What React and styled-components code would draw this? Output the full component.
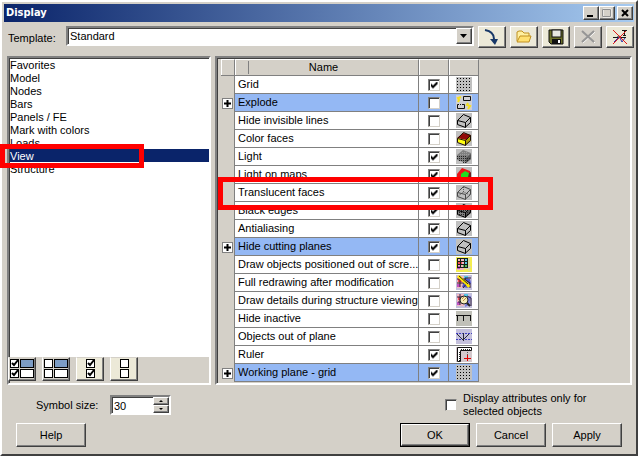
import React, { useState } from "react";
import styled, { createGlobalStyle, css } from "styled-components";

const face = "#d4d0c8";
const shade = "#808080";
const dark = "#404040";
const navy = "#0a246a";
const rowBlue = "#94b8f4";

const GlobalStyle = createGlobalStyle`
  * { box-sizing: border-box; }
  body { margin: 0; background: ${face}; }
  body, button, input, select {
    font-family: "Liberation Sans", Arial, sans-serif;
    font-size: 11px;
    line-height: 13px;
    color: #000;
  }
`;

const raised = css`
  border: 1px solid;
  border-color: #fff ${dark} ${dark} #fff;
  box-shadow: inset -1px -1px 0 ${shade};
`;

const sunken = css`
  border: 2px solid;
  border-color: ${shade} #fff #fff ${shade};
  box-shadow: inset 1px 1px 0 ${dark};
`;

const Window = styled.main`
  display: flex;
  flex-direction: column;
  min-height: 100vh;
  padding: 2px;
  background: ${face};
  border: 2px solid;
  border-color: #fff ${dark} ${dark} #fff;
`;

const TitleBar = styled.header`
  display: flex;
  align-items: center;
  gap: 2px;
  height: 18px;
  padding: 0 1px 0 2px;
  color: #fff;
  background: linear-gradient(90deg, ${navy}, #a6caf0);
`;

const Title = styled.h1`
  flex: 1;
  margin: 0;
  font: bold 11px/14px "DejaVu Sans Condensed", "DejaVu Sans", sans-serif;
`;

const CaptionGroup = styled.div`
  display: flex;
`;

const CaptionButton = styled.button`
  ${raised}
  width: 16px;
  height: 14px;
  padding: 0;
  background: ${face};
  svg { display: block; margin: auto; }
`;

const Toolbar = styled.div`
  display: flex;
  align-items: center;
  gap: 4px;
  padding: 4px 0 8px 4px;
`;

const TemplateLabel = styled.label`
  width: 54px;
  padding-top: 3px;
`;

const Combo = styled.div`
  ${sunken}
  display: flex;
  flex: 1;
  height: 20px;
  background: #fff;
  align-self: flex-start;
`;

const ComboSelect = styled.select`
  appearance: none;
  flex: 1;
  border: 0;
  padding: 0 2px;
  background: transparent;
`;

const ComboArrow = styled.span`
  ${raised}
  display: flex;
  align-items: center;
  justify-content: center;
  width: 16px;
  background: ${face};
`;

const ToolButton = styled.button`
  ${raised}
  display: flex;
  align-items: center;
  justify-content: center;
  width: 28px;
  height: 22px;
  padding: 0;
  background: ${(p) => (p.$light ? "#ece9d8" : face)};
`;

const Panels = styled.div`
  display: flex;
  gap: 4px;
  padding: 0 2px;
`;

const CategoryPanel = styled.section`
  ${sunken}
  flex: 0 0 204px;
  display: flex;
  flex-direction: column;
  margin-left: 1px;
`;

const CategoryList = styled.ul`
  flex: 1;
  margin: 0;
  padding: 0 0 0 1px;
  list-style: none;
  background: #fff;
  box-shadow: inset 1px 1px 0 ${dark};
`;

const Category = styled.li`
  position: relative;
  height: 13px;
  color: ${(p) => (p.$selected ? "#fff" : "#000")};
  background: ${(p) => (p.$selected ? navy : "transparent")};
`;

const CategoryButton = styled.button`
  display: block;
  width: 100%;
  padding: 1px 0 0;
  border: 0;
  text-align: left;
  color: inherit;
  background: none;
`;

const CategoryFrame = styled.span`
  position: absolute;
  inset: -5px 65px -6px -10px;
  z-index: 2;
  border: 5px solid #f00;
  pointer-events: none;
`;

const ListTools = styled.div`
  display: flex;
  gap: 6px;
  padding-bottom: 2px;
  margin-left: -1px;
`;

const ListTool = styled(ToolButton)`
  height: 24px;
  border-top-color: ${face};
`;

const OptionsPanel = styled.section`
  ${sunken}
  flex: 1;
  padding: 1px 0 1px 4px;
`;

const OptionsTable = styled.table`
  width: 258px;
  table-layout: fixed;
  border-collapse: separate;
  border-spacing: 0;
`;

const HeadCell = styled.th`
  height: 17px;
  padding: 0;
  font-weight: normal;
  border-top: 1px solid #fff;
  border-bottom: 1px solid ${shade};
  border-right: 1px solid ${shade};
  box-shadow: inset 1px 0 0 #fff;
`;

const NameHead = styled.div`
  display: flex;
  span:first-child { width: 14px; border-right: 1px solid ${shade}; }
  span:last-child { flex: 1; padding-right: 20px; }
`;

const OptionRow = styled.tr`
  position: relative;
  background: ${(p) => (p.$group ? rowBlue : "#fff")};
`;

const GutterCell = styled.td`
  height: 18px;
  padding: 0;
  border-right: 1px solid ${shade};
  background: ${face};
`;

const Expander = styled.button`
  display: block;
  width: 11px;
  height: 11px;
  margin-left: 1px;
  padding: 0;
  border: 1px solid ${shade};
  background: #fff;
  svg { display: block; margin: auto; }
`;

const OptionCell = styled.td`
  height: 18px;
  padding: ${(p) => (p.$name ? "0 0 0 3px" : "0")};
  line-height: 13px;
  white-space: nowrap;
  border-right: 1px solid ${shade};
  border-bottom: 1px solid ${shade};
  svg, input { display: block; margin: 0 auto; }
`;

const RowFrame = styled.span`
  position: absolute;
  inset: -7px -14px -8px -3px;
  z-index: 2;
  border: 5px solid #f00;
  pointer-events: none;
`;

const Check = styled.input.attrs({ type: "checkbox" })`
  appearance: none;
  flex: none;
  width: 12px;
  height: 12px;
  margin: 0;
  border: 1px solid;
  border-color: ${shade} ${face} ${face} ${shade};
  background: #fff;
  box-shadow: inset 1px 1px 0 ${dark};
  &:checked::before {
    content: "";
    display: block;
    width: 7px;
    height: 7px;
    margin: 2px;
    background: #000;
    clip-path: polygon(0 2px, 1px 2px, 1px 3px, 2px 3px, 2px 4px, 3px 4px, 3px 3px, 4px 3px, 4px 2px, 5px 2px, 5px 1px, 6px 1px, 6px 0, 7px 0, 7px 3px, 6px 3px, 6px 4px, 5px 4px, 5px 5px, 4px 5px, 4px 6px, 3px 6px, 3px 7px, 2px 7px, 2px 6px, 1px 6px, 1px 5px, 0 5px);
  }
`;

const SettingsRow = styled.div`
  display: flex;
  align-items: flex-start;
  justify-content: space-between;
  padding: 7px 48px 0 32px;
`;

const SymbolField = styled.div`
  display: flex;
  align-items: center;
  gap: 7px;
  padding-top: 3px;
`;

const SymbolLabel = styled.label`
  width: 67px;
  white-space: nowrap;
`;

const Spinner = styled.div`
  ${sunken}
  display: flex;
  width: 61px;
  height: 20px;
  background: #fff;
`;

const SpinInput = styled.input`
  flex: 1;
  min-width: 0;
  padding: 2px 2px 0;
  border: 0;
  background: none;
`;

const SpinButtons = styled.div`
  display: grid;
  grid-template-rows: 1fr 1fr;
  width: 16px;
`;

const SpinButton = styled.button`
  ${raised}
  display: flex;
  align-items: center;
  justify-content: center;
  padding: 0;
  background: ${face};
`;

const SelectedOnly = styled.label`
  display: flex;
  align-items: center;
  gap: 6px;
  width: 141px;
  span { flex: none; width: 136px; }
`;

const Actions = styled.footer`
  display: flex;
  gap: 6px;
  padding: 5px 12px 0;
`;

const ActionButton = styled.button`
  ${raised}
  width: 70px;
  height: 24px;
  padding: 0;
  background: ${face};
  ${(p) => p.$push && "margin-right: auto;"}
  ${(p) => p.$primary && `outline: 1px solid #000; outline-offset: -1px; border: 2px solid; border-color: #fff ${dark} ${dark} #fff;`}
`;

const Art = ({ size = 16, children }) => (
  <svg width={size} height={size} viewBox={`0 0 ${size} ${size}`} aria-hidden="true">
    {children}
  </svg>
);

const Tile = ({ fill = "#c0c0c0", children }) => (
  <svg width="16" height="15" viewBox="0 0 16 15" aria-hidden="true">
    <rect width="16" height="15" fill={fill} />
    {children}
  </svg>
);

const cubeLines = "M1.500 7.500L7.500 1.500L14.500 4.500L9.500 9.500ZM1.500 7.500V11.500L9.500 14.500V9.500M9.500 14L14.500 9.500V4.500";
const four = [0, 1, 2, 3, 4];

const Dots = () => (
  <Tile>
    {four.map((r) => four.map((c) => (
      <rect key={`${r}${c}`} x={1 + c * 3} y={1 + r * 3} width="1" height="1" fill="#000" />
    )))}
  </Tile>
);

const Cube = ({ back, lines = "#000" }) => (
  <Tile>
    <path d={cubeLines} fill="none" stroke={lines} />
    {back && <path d="M7.500 2V7L2 11M7.500 7L14 10" fill="none" stroke="#555" strokeDasharray="1 1" />}
  </Tile>
);

const ColorCube = () => (
  <Tile>
    <path d="M1 7L7 2L15 4L10 9Z" fill="#900808" />
    <path d="M1 7L10 9V14L1 11Z" fill="#ffff10" />
    <path d="M10 9L15 5V10L10 14Z" fill="#b0a000" />
    <path d={cubeLines} fill="none" stroke="#201000" />
  </Tile>
);

const MeshCube = ({ edges }) => (
  <Tile>
    <path d="M1 6L7 1L15 4V10L10 14L1 11Z" fill="#808080" />
    <path d="M10 9L15 5V10L10 14Z" fill="#555" />
    <path d="M1 7.500H10M1 9.500H15M3 11.500H13M7 13.500H11" stroke="#222" strokeDasharray="1 1" />
    <path d="M4 5.500H14M6 3.500H11" stroke="#a0a0a0" strokeDasharray="1 1" />
    {edges && <path d={cubeLines} fill="none" stroke="#000" />}
  </Tile>
);

const LightMap = () => (
  <Tile>
    <path d="M1 7L6 1L14 4L15 10L10 14L1 12Z" fill="#e81818" />
    <path d="M11 7L15 5V10L10 14Z" fill="#702020" />
    <path d="M5 7L9 4L13 6L12 10L8 12L5 10Z" fill="#20e020" />
    <path d="M2 12L9 14" stroke="#3040a0" />
  </Tile>
);

const Explode = () => (
  <Tile fill="#d0d0d4">
    <path d="M7.500 1.500H14.500V5.500H7.500ZM1.500 9.500H8.500V13.500H1.500Z" fill="none" stroke="#111" />
    <path d="M5 2L2 3L3 5L2 7M12 8L11 10L14 11L12 14" fill="none" stroke="#f4e020" strokeWidth="2" />
    <path d="M3 9.500H7" stroke="#d0d0d4" strokeDasharray="1 1" />
  </Tile>
);

const MapBase = () => (
  <>
    <path d="M1 1H8V13H1Z" fill="#f0b8c0" />
    <path d="M8 1H12V9H8Z" fill="#58c8e8" />
    <path d="M2 4H6V7H2Z" fill="#f04858" />
    <path d="M7 7H11V11H7Z" fill="#50c060" />
    <path d="M1 9H4V12H1Z" fill="#c050c0" />
  </>
);

const OffScreen = () => (
  <Tile fill="#f4ee50">
    <MapBase />
    <path d="M13 1V14M9 12L15 10" stroke="#c8c8e8" />
    <path d="M1.500 1V11M4.500 1V11M8.500 1V11M1 1.500H12M1 4.500H12M1 7.500H12M1 10.500H12M11.500 1V11" stroke="#182018" />
  </Tile>
);

const Redraw = () => (
  <Tile fill="#c4c0dc">
    <MapBase />
    <path d="M9 3L14 4L15 8L12 13L6 12" fill="#5058d0" />
    <path d="M1 4H10M1 8H8M4 1V12M8 4L14 8V13M9 3H15M7 13L11 8L14 12" fill="none" stroke="#301828" />
    <path d="M2 1L11 9L13 12" fill="none" stroke="#ffe800" strokeWidth="3" />
    <path d="M3 1L12 9" stroke="#3c3400" />
  </Tile>
);

const Details = () => (
  <Tile fill="#c4c0dc">
    <MapBase />
    <path d="M10 4L15 3L13 12L9 14" fill="#7478d8" />
    <path d="M1 4H7M2 9H6M4 1V12M11 3L15 5V13" fill="none" stroke="#302040" />
    <circle cx="8" cy="7" r="4" fill="#f4ecb8" stroke="#222" />
    <path d="M11 10L14 13" stroke="#222" strokeWidth="2" />
    <path d="M6 6L8 4M7 8L10 5" stroke="#c09040" />
  </Tile>
);

const Inactive = () => (
  <Tile fill="#c0c0b8">
    <path d="M0 4.500H15M1.500 5V10M7.500 5V10M14.500 5V10" stroke="#111" />
  </Tile>
);

const OutOfPlane = () => (
  <Tile fill="#c4c0dc">
    <path d="M0 4.500H16M0 10.500H16" stroke="#4040c0" strokeDasharray="2 1" />
    <path d="M1 5L7 11L13 5M7.500 4V12" fill="none" stroke="#282838" />
  </Tile>
);

const Ruler = () => (
  <Tile fill="#d4c8cc">
    <path d="M1.500 0.500H15.500V3.500H4.500V14.500H1.500Z" fill="#fff" stroke="#111" />
    <path d="M5 2.500H15M3.500 5V14" stroke="#222" strokeDasharray="1 1" />
    <path d="M11.500 8V14M8 11.500H15" stroke="#e00000" />
    <path d="M11.500 5V8" stroke="#555" strokeDasharray="1 1" />
  </Tile>
);

const CheckGlyph = ({ x, y, on }) => (
  <>
    <rect x={x + 0.5} y={y + 0.5} width="8" height="8" fill="#fff" stroke="#000" />
    {on && <path d={`M${x + 2} ${y + 4}l2 2l4 -5`} fill="none" stroke="#000" strokeWidth="2" />}
  </>
);

const SelectionArt = ({ on, columns }) => (
  <svg width="24" height="20" viewBox="0 0 24 20" aria-hidden="true">
    {[0, 10].map((y) => (
      <g key={y}>
        <CheckGlyph x={columns ? 0 : 8} y={y} on={on} />
        {columns && <rect x="10.5" y={y + 0.5} width="13" height="8" fill={y ? "#fff" : "#7c9cc4"} stroke="#000" />}
      </g>
    ))}
  </svg>
);

const options = [
  ["Grid", true, <Dots />],
  ["Explode", false, <Explode />, true],
  ["Hide invisible lines", false, <Cube />],
  ["Color faces", false, <ColorCube />],
  ["Light", true, <MeshCube />],
  ["Light on maps", true, <LightMap />],
  ["Translucent faces", true, <Cube back lines="#484848" />],
  ["Black edges", true, <MeshCube edges />],
  ["Antialiasing", true, <Cube />],
  ["Hide cutting planes", true, <Cube />, true],
  ["Draw objects positioned out of scre...", false, <OffScreen />],
  ["Full redrawing after modification", false, <Redraw />],
  ["Draw details during structure viewing", false, <Details />],
  ["Hide inactive", false, <Inactive />],
  ["Objects out of plane", false, <OutOfPlane />],
  ["Ruler", true, <Ruler />],
  ["Working plane - grid", true, <Dots />, true],
];

const categories = ["Favorites", "Model", "Nodes", "Bars", "Panels / FE", "Mark with colors", "Loads", "View", "Structure"];

export default function App() {
  const [selected, setSelected] = useState("View");
  const [size, setSize] = useState(30);

  return (
    <Window>
      <GlobalStyle />
      <TitleBar>
        <Title>Display</Title>
        <CaptionGroup>
          <CaptionButton aria-label="Minimize">
            <Art size={10}><path d="M1 8H7" stroke="#000" strokeWidth="2" /></Art>
          </CaptionButton>
          <CaptionButton aria-label="Maximize" disabled>
            <Art size={10}><path d="M1 1H9V9H1Z" fill="none" stroke="#fff" /><path d="M0.500 1.500H8.500V8.500H0.500Z" fill="none" stroke="#909090" /></Art>
          </CaptionButton>
        </CaptionGroup>
        <CaptionButton aria-label="Close">
          <Art size={10}><path d="M2 2L8 8M8 2L2 8" stroke="#000" strokeWidth="2" /></Art>
        </CaptionButton>
      </TitleBar>

      <Toolbar>
        <TemplateLabel htmlFor="template">Template:</TemplateLabel>
        <Combo>
          <ComboSelect id="template"><option>Standard</option></ComboSelect>
          <ComboArrow><Art size={8}><path d="M0 2H7L3.500 6Z" /></Art></ComboArrow>
        </Combo>
        <ToolButton $light aria-label="Apply template">
          <Art><path d="M1 1C7 2 10 5 10 10" fill="none" stroke="#183868" strokeWidth="2" /><path d="M6 10H14L11 16Z" fill="#183868" /></Art>
        </ToolButton>
        <ToolButton $light aria-label="Open template">
          <Art><path d="M1 12V3L3 2H6L8 4H13V7" fill="#fff0a0" stroke="#c09020" /><path d="M1 13L4 7H15L13 13Z" fill="#ffe070" stroke="#c09020" /></Art>
        </ToolButton>
        <ToolButton $light aria-label="Save template">
          <Art><path d="M1 1H15V15H3L1 13Z" fill="#6c7028" stroke="#111" /><rect x="4" y="1" width="9" height="7" fill="#e8e8e0" stroke="#111" /><rect x="4" y="10" width="9" height="5" fill="#111" /><rect x="10" y="11" width="2" height="3" fill="#fff" /></Art>
        </ToolButton>
        <ToolButton aria-label="Delete template" disabled>
          <Art><path d="M3 3L15 14M15 3L3 14" stroke="#fff" /><path d="M2 2L14 13M14 2L2 13" stroke="#969696" strokeWidth="2" /></Art>
        </ToolButton>
        <ToolButton $light aria-label="Clear attributes">
          <Art><path d="M1 8.500H14M10 1.500H15M12.500 1V6M11 6.500H14M7 6L5 9" fill="none" stroke="#181818" /><path d="M2 13L7 8M8 9L10 13L13 9" fill="none" stroke="#3030a0" /><path d="M1 1L15 15M14 2L1 15" stroke="#e01818" /></Art>
        </ToolButton>
      </Toolbar>

      <Panels>
        <CategoryPanel>
          <CategoryList>
            {categories.map((name) => (
              <Category key={name} $selected={name === selected}>
                <CategoryButton onClick={() => setSelected(name)}>{name}</CategoryButton>
                {name === "View" && <CategoryFrame />}
              </Category>
            ))}
          </CategoryList>
          <ListTools>
            <ListTool aria-label="Select all groups"><SelectionArt on columns /></ListTool>
            <ListTool aria-label="Clear all groups"><SelectionArt columns /></ListTool>
            <ListTool $light aria-label="Select all"><SelectionArt on /></ListTool>
            <ListTool $light aria-label="Clear all"><SelectionArt /></ListTool>
          </ListTools>
        </CategoryPanel>

        <OptionsPanel>
          <OptionsTable>
            <colgroup>
              <col width="14" /><col width="184" /><col width="30" /><col width="30" />
            </colgroup>
            <thead>
              <tr>
                <HeadCell />
                <HeadCell><NameHead><span /><span>Name</span></NameHead></HeadCell>
                <HeadCell />
                <HeadCell />
              </tr>
            </thead>
            <tbody>
              {options.map(([name, on, icon, group]) => (
                <OptionRow key={name} $group={group}>
                  <GutterCell>
                    {group && (
                      <Expander aria-label={`Expand ${name}`}>
                        <Art size={9}><path d="M1 4.500H8M4.500 1V8" stroke="#000" strokeWidth="2" /></Art>
                      </Expander>
                    )}
                    {name === "Translucent faces" && <RowFrame />}
                  </GutterCell>
                  <OptionCell $name>{name}</OptionCell>
                  <OptionCell><Check defaultChecked={on} aria-label={name} /></OptionCell>
                  <OptionCell>{icon}</OptionCell>
                </OptionRow>
              ))}
            </tbody>
          </OptionsTable>
        </OptionsPanel>
      </Panels>

      <SettingsRow>
        <SymbolField>
          <SymbolLabel htmlFor="symbol-size">Symbol size:</SymbolLabel>
          <Spinner>
            <SpinInput id="symbol-size" value={size} onChange={(e) => setSize(Number(e.target.value) || 0)} />
            <SpinButtons>
              <SpinButton aria-label="Increase" onClick={() => setSize(size + 1)}><Art size={4}><path d="M0 3L2 1L4 3Z" /></Art></SpinButton>
              <SpinButton aria-label="Decrease" onClick={() => setSize(size - 1)}><Art size={4}><path d="M0 1L2 3L4 1Z" /></Art></SpinButton>
            </SpinButtons>
          </Spinner>
        </SymbolField>
        <SelectedOnly>
          <Check />
          <span>Display attributes only for selected objects</span>
        </SelectedOnly>
      </SettingsRow>

      <Actions>
        <ActionButton $push>Help</ActionButton>
        <ActionButton $primary>OK</ActionButton>
        <ActionButton>Cancel</ActionButton>
        <ActionButton>Apply</ActionButton>
      </Actions>
    </Window>
  );
}
